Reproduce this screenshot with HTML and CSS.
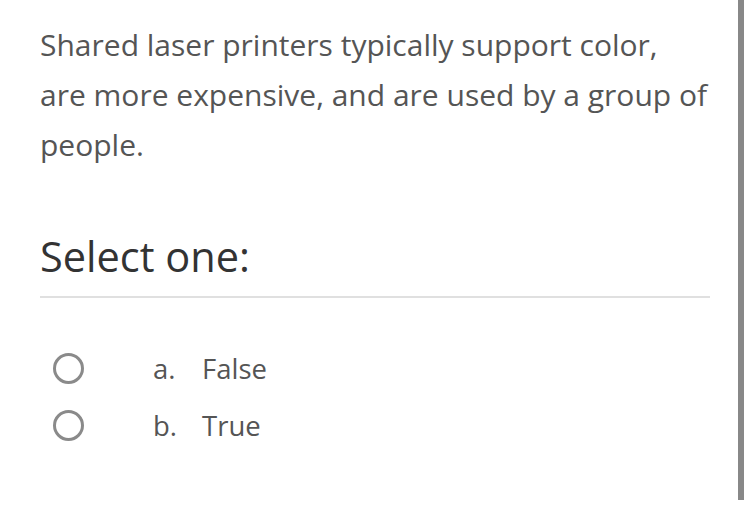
FILE: index.html
```html
<!DOCTYPE html>
<html>
<head>
<meta charset="utf-8">
<link rel="stylesheet" href="styles.css">
</head>
<body>
<div class="page">
  <div class="content">
    <p class="question">Shared laser printers typically support color, are more expensive, and are used by a group of people.</p>
    <h2 class="prompt">Select one:</h2>
    <div class="divider"></div>
    <div class="options">
      <label class="option"><span class="radio"></span><span class="letter">a.</span><span class="text">False</span></label>
      <label class="option"><span class="radio"></span><span class="letter">b.</span><span class="text">True</span></label>
    </div>
  </div>
  <div class="scrollbar"></div>
</div>
</body>
</html>
```

FILE: styles.css
```css
html, body {
  margin: 0;
  padding: 0;
  background: #fff;
}
body {
  font-family: "Open Sans", sans-serif;
}
.page {
  display: flex;
  width: 750px;
  height: 507px;
}
.content {
  width: 670px;
  padding: 20px 0 0 40px;
}
.question {
  margin: 0;
  font-size: 30px;
  line-height: 50px;
  color: #555;
}
.prompt {
  margin: 61px 0 0 0;
  font-weight: 400;
  font-size: 41.5px;
  line-height: 50px;
  color: #333;
}
.divider {
  margin-top: 15px;
  height: 2px;
  background: #e0e0e0;
}
.options {
  margin-top: 50px;
  display: flex;
  flex-direction: column;
  gap: 17px;
}
.option {
  display: flex;
  align-items: center;
  height: 40px;
  font-size: 27.5px;
  color: #555;
}
.radio {
  box-sizing: border-box;
  width: 31px;
  height: 31px;
  margin-left: 13px;
  border: 3px solid #8a8a8a;
  border-radius: 50%;
}
.letter {
  margin-left: 69px;
  width: 49px;
}
.scrollbar {
  margin-left: 28px;
  width: 6px;
  height: 500px;
  background: #888;
}
```
